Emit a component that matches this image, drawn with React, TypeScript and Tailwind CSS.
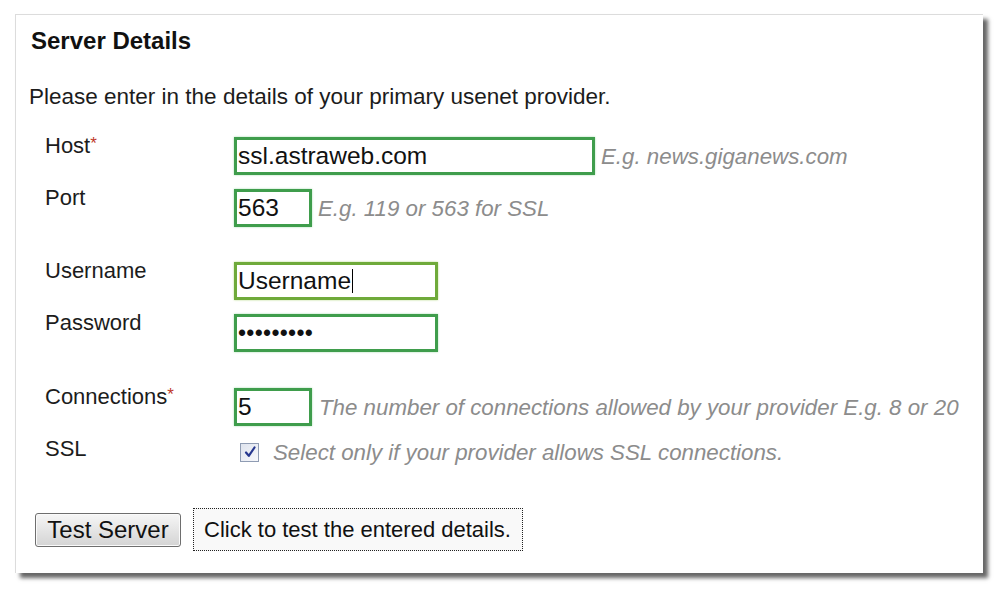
import React from "react";

const font = "font-['Liberation_Sans',Arial,Helvetica,sans-serif]";

function Label({ text, req }: { text: string; req?: boolean }) {
  return (
    <div className="w-[218px] shrink-0 pl-[29px] text-[22px] leading-[24px] text-[#1c1c1c]">
      {text}
      {req && <span className="relative -top-[4px] text-[17px] text-[#c0392b]">*</span>}
    </div>
  );
}

function Hint({ children, ml = "ml-[6px]" }: { children: React.ReactNode; ml?: string }) {
  return <span className={`${ml} mt-[2px] text-[22.3px] italic leading-[26px] text-[#8c8c8c] whitespace-nowrap`}>{children}</span>;
}

function Box({ w, value, focus, pw }: { w: string; value: string; focus?: boolean; pw?: boolean }) {
  return (
    <div
      className={`${w} h-[38px] shrink-0 border-[3px] ${
        focus ? "border-[#6faa3a] shadow-[0_0_2px_#b9d98a]" : "border-[#3f9d4c] shadow-[0_0_2px_#a8dcb0]"
      } bg-white flex items-center pl-[1px] overflow-hidden`}
    >
      {pw ? (
        <span className="text-[23px] leading-none tracking-[0.3px] text-[#111]">•••••••••</span>
      ) : (
        <span className="text-[24.5px] leading-none text-[#111] whitespace-nowrap flex items-center">
          {value}
          {focus && <span className="inline-block w-[1px] h-[24px] bg-black ml-[1px]" />}
        </span>
      )}
    </div>
  );
}

export default function App() {
  return (
    <div className={`w-[1000px] h-[590px] bg-white overflow-hidden ${font}`}>
      <div className="ml-[15px] mt-[14px] w-[968px] h-[559px] bg-white border-l border-t border-[#dcdcdc] shadow-[5px_5px_4px_rgba(0,0,0,0.6)]">
        <div className="pt-[12px] pl-[15px] text-[24px] leading-[27px] font-bold text-[#111]">Server Details</div>
        <div className="mt-[30px] pl-[13px] text-[22.5px] leading-[25px] text-[#1c1c1c]">
          Please enter in the details of your primary usenet provider.
        </div>

        <div className="mt-[25px] flex flex-col">
          <div className="h-[52px] flex items-start">
            <Label text="Host" req />
            <div className="mt-[3px] flex items-center">
              <Box w="w-[361px]" value="ssl.astraweb.com" />
              <Hint>E.g. news.giganews.com</Hint>
            </div>
          </div>
          <div className="h-[73px] flex items-start">
            <Label text="Port" />
            <div className="mt-[3px] flex items-center">
              <Box w="w-[78px]" value="563" />
              <Hint>E.g. 119 or 563 for SSL</Hint>
            </div>
          </div>
          <div className="h-[52px] flex items-start">
            <Label text="Username" />
            <div className="mt-[3px] flex items-center">
              <Box w="w-[204px]" value="Username" focus />
            </div>
          </div>
          <div className="h-[74px] flex items-start">
            <Label text="Password" />
            <div className="mt-[3px] flex items-center">
              <Box w="w-[204px]" value="" pw />
            </div>
          </div>
          <div className="h-[52px] flex items-start">
            <Label text="Connections" req />
            <div className="mt-[3px] flex items-center">
              <Box w="w-[78px]" value="5" />
              <Hint ml="ml-[7px]">The number of connections allowed by your provider E.g. 8 or 20</Hint>
            </div>
          </div>
          <div className="h-[71px] flex items-start">
            <Label text="SSL" />
            <div className="mt-[3px] flex items-center h-[24px]">
              <div className="ml-[6px] w-[19px] h-[19px] border border-[#8f9cb3] bg-gradient-to-br from-[#dfe4ee] to-[#f7f8fb] flex items-center justify-center">
                <svg width="14" height="14" viewBox="0 0 14 14">
                  <path d="M3 7.5 L5.8 10.8 L11.5 2.5" fill="none" stroke="#27388f" strokeWidth="2.2" strokeLinejoin="round" strokeLinecap="round" />
                </svg>
              </div>
              <Hint ml="ml-[14px]">Select only if your provider allows SSL connections.</Hint>
            </div>
          </div>
          <div className="flex items-center pl-[19px]">
            <button className="h-[34px] w-[146px] rounded-[3px] border border-[#6e6e6e] bg-gradient-to-b from-[#f6f6f6] to-[#d4d4d4] text-[24px] leading-none text-[#111] shadow-[inset_0_0_0_1px_#fafafa]">
              Test Server
            </button>
            <div className="ml-[12px] h-[43px] w-[330px] border border-dotted border-[#222] bg-[#f9f9f9] flex items-center pl-[10px] text-[22px] text-[#111] whitespace-nowrap">
              Click to test the entered details.
            </div>
          </div>
        </div>
      </div>
    </div>
  );
}
